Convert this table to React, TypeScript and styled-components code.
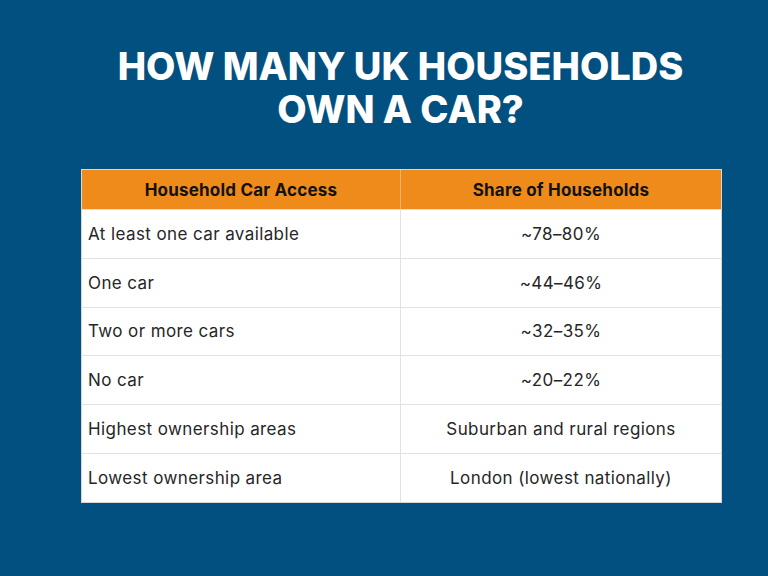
import React from 'react';
import styled, { createGlobalStyle } from 'styled-components';

const GlobalStyle = createGlobalStyle`
  html, body {
    margin: 0;
    padding: 0;
    background: #02507f;
  }
  body {
    font-family: Inter, "Open Sans", "Liberation Sans", sans-serif;
  }
`;

const rows = [
  { label: 'At least one car available', value: '~78–80%' },
  { label: 'One car', value: '~44–46%' },
  { label: 'Two or more cars', value: '~32–35%' },
  { label: 'No car', value: '~20–22%' },
  { label: 'Highest ownership areas', value: 'Suburban and rural regions' },
  { label: 'Lowest ownership area', value: 'London (lowest nationally)' },
];

const Page = styled.div`
  width: 768px;
  height: 576px;
  box-sizing: border-box;
  padding: 45px 48px 0 81px;
  display: flex;
  flex-direction: column;
  align-items: stretch;
`;

const Title = styled.h1`
  margin: 0 0 38px;
  color: #ffffff;
  font-size: 38px;
  font-weight: 800;
  line-height: 43px;
  text-align: center;
  letter-spacing: 0;
  width: 639px;
`;

const Table = styled.div`
  width: 639px;
  background: #ffffff;
  border: 1px solid #d6d6d6;
  display: grid;
  grid-template-columns: 319px 1fr;
`;

const HeadCell = styled.div<{ $last?: boolean }>`
  background: #ee8b1a;
  height: 39px;
  display: flex;
  align-items: center;
  justify-content: center;
  font-size: 17px;
  font-weight: 700;
  letter-spacing: 0.2px;
  color: #111;
  border-right: ${p => (p.$last ? 'none' : '1px solid #f3b56e')};
`;

const Cell = styled.div<{ $center?: boolean; $last?: boolean }>`
  height: 47.8px;
  display: flex;
  align-items: center;
  justify-content: ${p => (p.$center ? 'center' : 'flex-start')};
  padding: 0 6px;
  font-size: 17px;
  letter-spacing: 0.4px;
  color: #262626;
  border-top: 1px solid #e2e2e2;
  border-right: ${p => (p.$last ? 'none' : '1px solid #e2e2e2')};
`;

const App = () => {
  return (
    <>
      <GlobalStyle />
      <Page>
        <Title>
          HOW MANY UK HOUSEHOLDS
          <br />
          OWN A CAR?
        </Title>
        <Table>
          <HeadCell>Household Car Access</HeadCell>
          <HeadCell $last>Share of Households</HeadCell>
          {rows.map(r => (
            <React.Fragment key={r.label}>
              <Cell>{r.label}</Cell>
              <Cell $center $last>{r.value}</Cell>
            </React.Fragment>
          ))}
        </Table>
      </Page>
    </>
  );
};

export default App;
